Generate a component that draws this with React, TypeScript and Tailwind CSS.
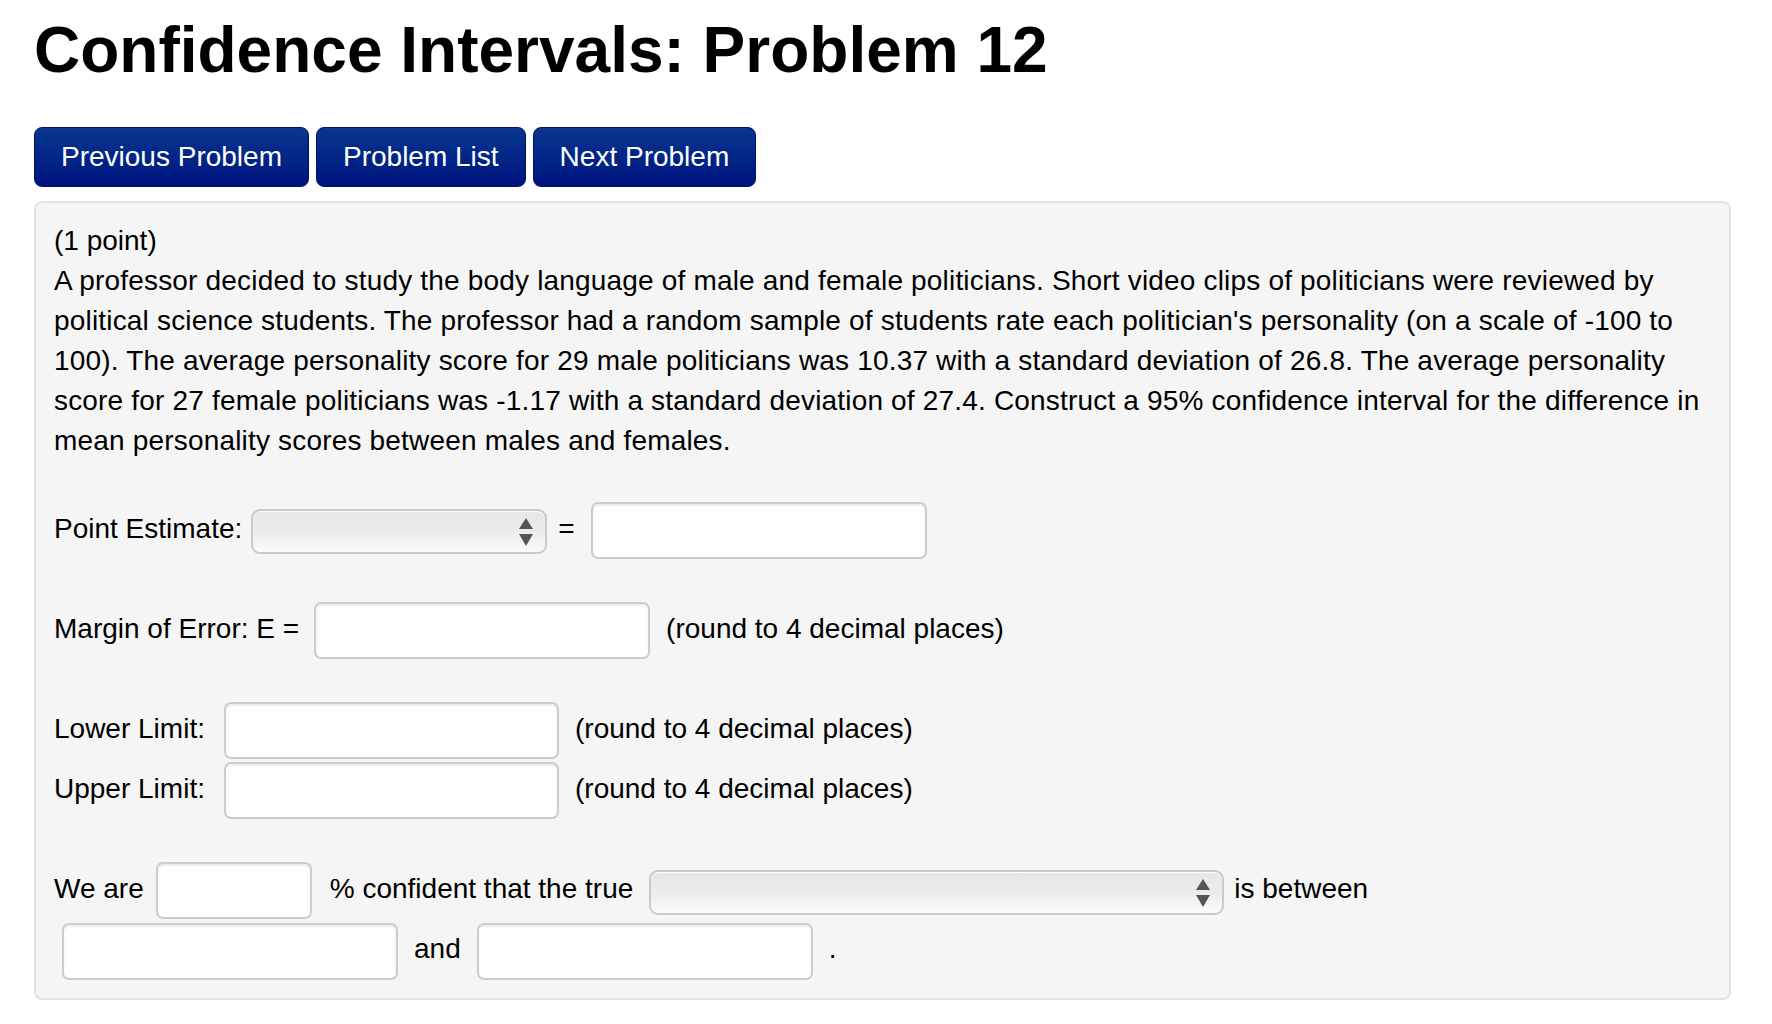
import React from "react";

function TextInput({ w }: { w: string }) {
  return (
    <input
      type="text"
      className={`${w} h-[57px] shrink-0 bg-white border-2 border-[#cccccc] rounded-[7px] shadow-[inset_0_2px_2px_rgba(0,0,0,0.08)] outline-none`}
    />
  );
}

function Select({ w }: { w: string }) {
  return (
    <div
      className={`${w} h-[45px] shrink-0 relative rounded-[9px] border-2 border-[#cacaca] bg-gradient-to-b from-[#e6e6e6] via-[#ececec] to-[#fbfbfb] shadow-[inset_0_1px_1px_rgba(255,255,255,0.9)]`}
    >
      <svg
        className="absolute right-[11px] top-[7px]"
        width="16"
        height="28"
        viewBox="0 0 16 28"
      >
        <polygon points="8,0 15,11 1,11" fill="#555555" />
        <polygon points="1,16 15,16 8,28" fill="#555555" />
      </svg>
    </div>
  );
}

function T({ children, className = "" }: { children: React.ReactNode; className?: string }) {
  return <span className={`pb-[4px] ${className}`}>{children}</span>;
}

export default function App() {
  return (
    <div
      className="min-h-[1024px] bg-white text-black px-[34px]"
      style={{ fontFamily: '"Liberation Sans", Arial, Helvetica, sans-serif' }}
    >
      <h1 className="pt-[15px] text-[64px] leading-[70px] font-bold">
        Confidence Intervals: Problem 12
      </h1>

      <div className="mt-[42px] flex gap-[7px]">
        {["Previous Problem", "Problem List", "Next Problem"].map((t) => (
          <button
            key={t}
            className="h-[60px] px-[26px] rounded-[8px] border border-[#001466] bg-gradient-to-b from-[#0b358f] to-[#00127f] text-white text-[28px] leading-[40px]"
          >
            {t}
          </button>
        ))}
      </div>

      <div className="mt-[14px] w-[1697px] h-[799px] rounded-[8px] border-2 border-[#e3e3e3] bg-[#f5f5f5] px-[18px] pt-[18px] text-[28px] leading-[40px]">
        <div>(1 point)</div>
        <div className="tracking-[0.18px]">
          A professor decided to study the body language of male and female
          politicians. Short video clips of politicians were reviewed by
          <br />
          political science students. The professor had a random sample of
          students rate each politician's personality (on a scale of -100 to
          <br />
          100). The average personality score for 29 male politicians was 10.37
          with a standard deviation of 26.8. The average personality
          <br />
          score for 27 female politicians was -1.17 with a standard deviation of
          27.4. Construct a 95% confidence interval for the difference in
          <br />
          mean personality scores between males and females.
        </div>

        <div className="mt-[41px] flex items-center h-[57px]">
          <T>Point Estimate:</T>
          <div className="ml-[9px] mt-[2px]">
            <Select w="w-[296px]" />
          </div>
          <T className="ml-[11px]">=</T>
          <div className="ml-[16px]">
            <TextInput w="w-[336px]" />
          </div>
        </div>

        <div className="mt-[43px] flex items-center h-[57px]">
          <T>Margin of Error: E =</T>
          <div className="ml-[15px]">
            <TextInput w="w-[336px]" />
          </div>
          <T className="ml-[16px]">(round to 4 decimal places)</T>
        </div>

        <div className="mt-[43px] flex items-center h-[57px]">
          <T className="w-[170px]">Lower Limit:</T>
          <TextInput w="w-[335px]" />
          <T className="ml-[16px]">(round to 4 decimal places)</T>
        </div>

        <div className="mt-[3px] flex items-center h-[57px]">
          <T className="w-[170px]">Upper Limit:</T>
          <TextInput w="w-[335px]" />
          <T className="ml-[16px]">(round to 4 decimal places)</T>
        </div>

        <div className="mt-[43px] flex items-center h-[57px]">
          <T>We are</T>
          <div className="ml-[12px]">
            <TextInput w="w-[156px]" />
          </div>
          <T className="ml-[18px]">% confident that the true</T>
          <div className="ml-[16px] mt-[3px]">
            <Select w="w-[575px]" />
          </div>
          <T className="ml-[10px]">is between</T>
        </div>

        <div className="mt-[3px] flex items-center h-[58px]">
          <div className="ml-[8px]">
            <TextInput w="w-[336px]" />
          </div>
          <T className="ml-[16px]">and</T>
          <div className="ml-[16px]">
            <TextInput w="w-[336px]" />
          </div>
          <T className="ml-[16px]">.</T>
        </div>
      </div>
    </div>
  );
}
